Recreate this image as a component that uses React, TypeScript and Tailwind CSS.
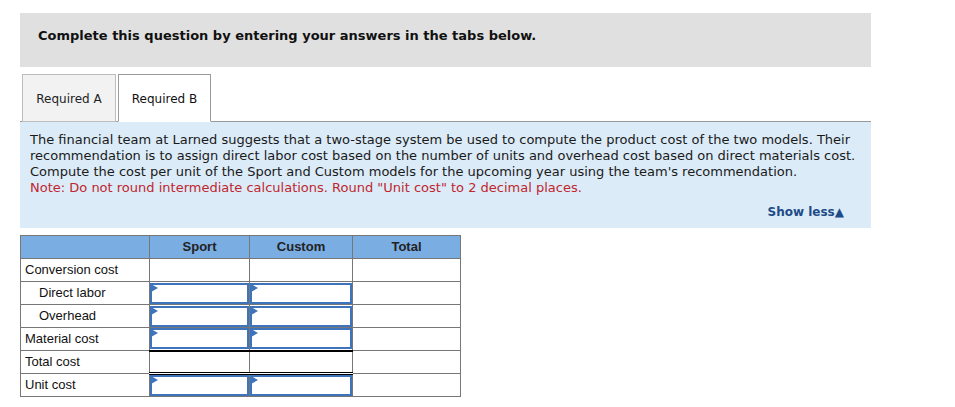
import React from "react";

const ROWS = [
  { label: "Conversion cost", indent: false, input: false, total: false },
  { label: "Direct labor", indent: true, input: true, total: false },
  { label: "Overhead", indent: true, input: true, total: false },
  { label: "Material cost", indent: false, input: true, total: false },
  { label: "Total cost", indent: false, input: false, total: true },
  { label: "Unit cost", indent: false, input: true, total: false },
];

function InputBox() {
  return (
    <div className="relative h-[21px] w-full border-2 border-[#3d74bb] bg-white">
      <span className="absolute -left-[1px] -top-[1px] h-0 w-0 border-y-[4px] border-l-[7px] border-y-transparent border-l-[#3d74bb]" />
    </div>
  );
}

function CostTable() {
  return (
    <table className="ml-5 mt-[7px] border-collapse font-['Liberation_Sans',Arial,sans-serif] text-[13px] text-[#111]">
      <colgroup>
        <col className="w-[129px]" />
        <col className="w-[100px]" />
        <col className="w-[103px]" />
        <col className="w-[108px]" />
      </colgroup>
      <thead>
        <tr className="h-[23px] bg-[#7aade2]">
          <th className="border border-[#777]" />
          <th className="border border-[#777] font-bold text-[#222]">Sport</th>
          <th className="border border-[#777] font-bold text-[#222]">Custom</th>
          <th className="border border-[#777] font-bold text-[#222]">Total</th>
        </tr>
      </thead>
      <tbody>
        {ROWS.map((row) => (
          <tr key={row.label} className="h-[23px]">
            <td className={`border border-[#777] p-0 ${row.indent ? "pl-[18px]" : "pl-[4px]"}`}>{row.label}</td>
            {[0, 1].map((i) => (
              <td
                key={i}
                className={
                  row.total
                    ? "border-x border-x-[#777] border-t-2 border-t-black border-b-[3px] border-b-black border-double p-0"
                    : "border border-[#777] p-0"
                }
              >
                {row.input ? <InputBox /> : null}
              </td>
            ))}
            <td className="border border-[#777] p-0" />
          </tr>
        ))}
      </tbody>
    </table>
  );
}

export default function App() {
  return (
    <div className="min-h-screen bg-white pt-[13px] font-['DejaVu_Sans',Verdana,sans-serif]">
      <div className="mx-5 h-[54px] w-[851px] bg-[#e0e0e0] pl-[18px] pt-[15px]">
        <p className="text-[13px] font-bold leading-[16px] text-[#111]">Complete this question by entering your answers in the tabs below.</p>
      </div>

      <div className="ml-5 mt-[7px] flex w-[851px] items-end gap-[2px] border-b border-[#9a9a9a] pl-[2px]">
        <div className="-mb-px flex h-[48px] w-[94px] items-center justify-center border border-[#bdbdbd] bg-[#f2f2f2] pt-[2px] text-[12px] text-[#222]">
          Required A
        </div>
        <div className="-mb-px flex h-[48px] w-[93px] items-center justify-center border border-b-white border-[#9a9a9a] bg-white pt-[2px] text-[12px] text-[#111]">
          Required B
        </div>
      </div>

      <div className="ml-5 w-[851px] bg-[#dbebf8] px-[10px] pb-[8px] pt-[10px] text-[13px] leading-[16px] text-[#1a1a1a]">
        <p>
          The financial team at Larned suggests that a two-stage system be used to compute the product cost of the two models. Their recommendation is to assign direct labor cost based on the number of units and overhead cost based on direct materials cost. Compute the cost per unit of the Sport and Custom models for the upcoming year using the team's recommendation.
        </p>
        <p className="text-[#c0262d]">Note: Do not round intermediate calculations. Round "Unit cost" to 2 decimal places.</p>
        <div className="mt-[8px] flex justify-end pr-[17px]">
          <span className="text-[12px] font-bold leading-[16px] text-[#1e4c86]">Show less▲</span>
        </div>
      </div>

      <CostTable />
    </div>
  );
}
